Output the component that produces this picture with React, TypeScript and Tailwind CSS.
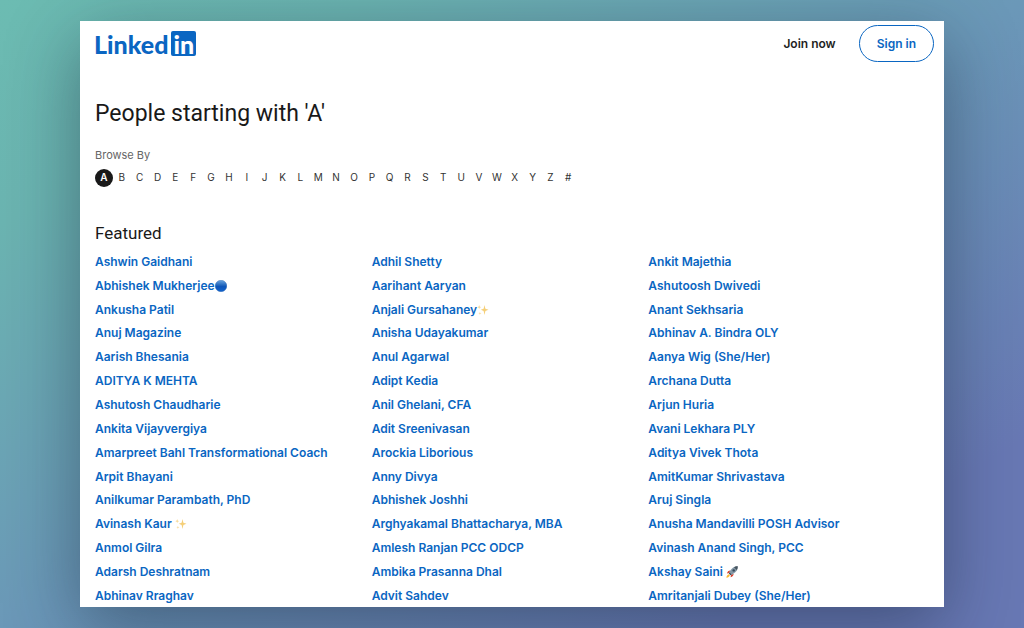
import { clsx } from 'clsx';

const letters = [...'ABCDEFGHIJKLMNOPQRSTUVWXYZ#'];

type Person = { name: string; icon?: 'circle' | 'sparkles' | 'rocket'; spaced?: boolean };

const people: Person[] = [
  { name: 'Ashwin Gaidhani' },
  { name: 'Adhil Shetty' },
  { name: 'Ankit Majethia' },
  { name: 'Abhishek Mukherjee', icon: 'circle' },
  { name: 'Aarihant Aaryan' },
  { name: 'Ashutoosh Dwivedi' },
  { name: 'Ankusha Patil' },
  { name: 'Anjali Gursahaney', icon: 'sparkles' },
  { name: 'Anant Sekhsaria' },
  { name: 'Anuj Magazine' },
  { name: 'Anisha Udayakumar' },
  { name: 'Abhinav A. Bindra OLY' },
  { name: 'Aarish Bhesania' },
  { name: 'Anul Agarwal' },
  { name: 'Aanya Wig (She/Her)' },
  { name: 'ADITYA K MEHTA' },
  { name: 'Adipt Kedia' },
  { name: 'Archana Dutta' },
  { name: 'Ashutosh Chaudharie' },
  { name: 'Anil Ghelani, CFA' },
  { name: 'Arjun Huria' },
  { name: 'Ankita Vijayvergiya' },
  { name: 'Adit Sreenivasan' },
  { name: 'Avani Lekhara PLY' },
  { name: 'Amarpreet Bahl Transformational Coach' },
  { name: 'Arockia Liborious' },
  { name: 'Aditya Vivek Thota' },
  { name: 'Arpit Bhayani' },
  { name: 'Anny Divya' },
  { name: 'AmitKumar Shrivastava' },
  { name: 'Anilkumar Parambath, PhD' },
  { name: 'Abhishek Joshhi' },
  { name: 'Aruj Singla' },
  { name: 'Avinash Kaur', icon: 'sparkles', spaced: true },
  { name: 'Arghyakamal Bhattacharya, MBA' },
  { name: 'Anusha Mandavilli POSH Advisor' },
  { name: 'Anmol Gilra' },
  { name: 'Amlesh Ranjan PCC ODCP' },
  { name: 'Avinash Anand Singh, PCC' },
  { name: 'Adarsh Deshratnam' },
  { name: 'Ambika Prasanna Dhal' },
  { name: 'Akshay Saini', icon: 'rocket', spaced: true },
  { name: 'Abhinav Rraghav' },
  { name: 'Advit Sahdev' },
  { name: 'Amritanjali Dubey (She/Her)' },
];

function CircleIcon() {
  return (
    <svg viewBox="0 0 12 12" className="size-3" aria-hidden="true">
      <defs>
        <linearGradient id="ball" x1="0" y1="0" x2="0" y2="1">
          <stop offset="0" stopColor="#6aa6e0" />
          <stop offset="0.45" stopColor="#1f64bc" />
          <stop offset="0.55" stopColor="#0d55b8" />
          <stop offset="1" stopColor="#1263cc" />
        </linearGradient>
      </defs>
      <circle cx="6" cy="6" r="5.8" fill="url(#ball)" stroke="#185bad" strokeWidth="0.4" />
    </svg>
  );
}

function SparklesIcon() {
  return (
    <svg viewBox="0 0 12 12" className="size-3" aria-hidden="true">
      <path d="M7.5 1 8.4 4.7 11.5 5.8 8.4 6.9 7.5 11 6.6 6.9 3.8 5.8 6.6 4.7Z" fill="#f5cf78" />
      <path d="M2.2 1 2.7 2.6 4.2 3.2 2.7 3.8 2.2 5.3 1.7 3.8.3 3.2 1.7 2.6Z" fill="#f7da98" />
      <path d="M2.9 7.8 3.3 9 4.5 9.4 3.3 9.8 2.9 11 2.5 9.8 1.3 9.4 2.5 9Z" fill="#f7da98" />
    </svg>
  );
}

function RocketIcon() {
  return (
    <svg viewBox="0 0 12 12" className="size-3" aria-hidden="true">
      <path d="M3.4 8.2C1.6 8.3.7 9.5.3 11.8 2.5 11.4 3.8 10.3 3.9 8.7Z" fill="#f9b934" />
      <path d="M4.3 4.5C2.6 4.5 1.4 5.7 1 7.5L3.2 7.1ZM7.6 7.8C7.6 9.5 6.4 10.8 4.6 11.2L5 8.9Z" fill="#d9402c" />
      <path d="M11.7.3C7.9.2 5.1 2.3 2.9 7.3L4.8 9.2C9.8 6.9 11.9 4.1 11.7.3Z" fill="#8497a5" />
      <path d="M11.7.3C10.3.2 9.1.5 8 1.2L10.8 4C11.5 2.9 11.8 1.7 11.7.3Z" fill="#46535d" />
      <path d="m2.9 7.3 1.9 1.9.7-.6-2-2Z" fill="#333c44" />
      <circle cx="7.7" cy="4.4" r="1.2" fill="#34495a" />
    </svg>
  );
}

const icons = { circle: CircleIcon, sparkles: SparklesIcon, rocket: RocketIcon };

function PersonLink({ name, icon, spaced }: Person) {
  const Icon = icon && icons[icon];
  return (
    <a href="#" className="inline-flex items-center text-[#0a66c2] hover:underline">
      {name}
      {Icon && (
        <span className={clsx(spaced && 'ml-[3px]')}>
          <Icon />
        </span>
      )}
    </a>
  );
}

function Header() {
  return (
    <header className="flex items-center justify-between pt-1 pr-[10px] pl-[14px]">
      <a href="#" aria-label="LinkedIn" className="flex items-center gap-[3px] font-['Lato'] text-[25px] leading-6 font-black text-[#0a66c2]">
        <span>Linked</span>
        <span className="flex size-[25px] items-center justify-center rounded-[2px] bg-[#0a66c2] text-white">in</span>
      </a>
      <nav className="flex items-center gap-[23px] text-xs font-semibold">
        <a href="#" className="text-[#1f1f1f]">
          Join now
        </a>
        <button type="button" className="h-[37px] rounded-full border border-[#0a66c2] px-[17px] text-[#0a66c2]">
          Sign in
        </button>
      </nav>
    </header>
  );
}

export default function App() {
  return (
    <div className="flex min-h-screen flex-col bg-[linear-gradient(to_bottom_right,#6cbcb2_0%,#6bb4b1_18%,#6b98b8_50%,#6878b4_85%,#6878b4_100%)] px-20 py-[21px] font-['Inter',sans-serif]">
      <div className="flex flex-1 flex-col bg-white shadow-[0_20px_68px_rgba(20,35,55,0.45)]">
        <Header />
        <main className="flex flex-1 flex-col pt-9 pr-[19px] pb-px pl-[15px] text-[#191919]">
          <h1 className="font-['Roboto'] text-[23px] leading-8">People starting with 'A'</h1>
          <p className="mt-[17px] text-[11px] leading-4 text-[#666]">Browse By</p>
          <nav aria-label="Browse by letter" className="mt-[6px] grid max-w-[482px] grid-cols-[repeat(27,1fr)]">
            {letters.map((letter, i) => (
              <a
                key={letter}
                href="#"
                className={clsx(
                  'flex aspect-square items-center justify-center text-[10px]',
                  i === 0 ? 'rounded-full bg-[#191919] font-semibold text-white' : 'text-[#333]',
                )}
              >
                {letter}
              </a>
            ))}
          </nav>
          <h2 className="mt-[34px] font-['Roboto'] text-[17px] leading-6">Featured</h2>
          <ul className="mt-[7px] grid flex-1 grid-cols-3 content-between text-xs leading-5 font-semibold">
            {people.map((person) => (
              <li key={person.name} className="flex">
                <PersonLink {...person} />
              </li>
            ))}
          </ul>
        </main>
      </div>
    </div>
  );
}
